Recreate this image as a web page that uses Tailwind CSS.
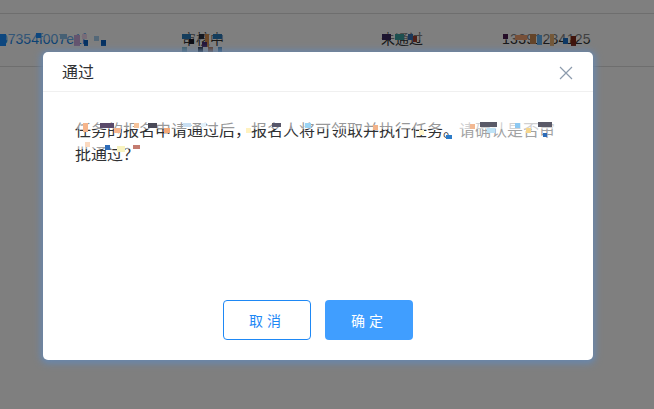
<!DOCTYPE html>
<html lang="zh-CN">
<head>
  <meta charset="UTF-8">
  <title>通过</title>
  <script src="https://cdn.jsdelivr.net/npm/@tailwindcss/browser@4"></script>
</head>
<body class="bg-white font-['Liberation_Sans','Noto_Sans_CJK_SC',sans-serif]">
  <div class="relative h-[409px] w-[654px] overflow-hidden">
    <!-- table behind the dialog -->
    <div class="h-[14px] border-b border-[#dcdcdc]"></div>
    <div class="grid h-[53px] grid-cols-[182px_199px_121px_1fr] items-center border-b border-[#dcdcdc] pb-[1px] text-[14px] text-[#303133]">
      <div class="whitespace-nowrap text-[#1684e8]">07354f007e1f</div>
      <div>审核中</div>
      <div>未通过</div>
      <div class="tracking-[0.3px]">13391234125</div>
    </div>
    <!-- mosaic over the table text -->
    <svg class="absolute left-0 top-0" width="654" height="60">
      <rect x="0" y="33" width="90" height="7" fill="#ffffff" fill-opacity=".35"/>
      <rect x="182" y="33" width="46" height="7" fill="#ffffff" fill-opacity=".4"/>
      <rect x="381" y="33" width="43" height="7" fill="#ffffff" fill-opacity=".4"/>
      <rect x="502" y="33" width="92" height="7" fill="#ffffff" fill-opacity=".4"/>
      <g fill="#1a8fff"><rect x="0" y="34" width="6" height="12"/><rect x="36" y="33" width="5" height="5"/><rect x="84" y="40" width="4" height="6" fill="#0b63c5"/><rect x="101" y="40" width="5" height="6" fill="#0b63c5"/></g>
      <rect x="60" y="34" width="7" height="5" fill="#8cc0e8"/><rect x="74" y="35" width="6" height="11" fill="#c9a8dc"/><rect x="82" y="34" width="5" height="5" fill="#f0d8f0"/><rect x="94" y="36" width="5" height="5" fill="#a8d0f0"/>
      <rect x="182" y="34" width="9" height="5" fill="#2a7ab8"/><rect x="189" y="39" width="5" height="5" fill="#1a1a2a"/><rect x="199" y="34" width="5" height="5" fill="#2a3040"/><rect x="205" y="34" width="4" height="13" fill="#d89050"/><rect x="202" y="42" width="5" height="5" fill="#4a2a70"/><rect x="213" y="34" width="9" height="5" fill="#2a7ab8"/><rect x="182" y="47" width="5" height="5" fill="#80b8c8"/><rect x="198" y="47" width="5" height="5" fill="#1a2030"/><rect x="208" y="47" width="5" height="5" fill="#b87048"/><rect x="218" y="47" width="4" height="5" fill="#4a90c8"/>
      <rect x="382" y="34" width="9" height="6" fill="#3a2a60"/><rect x="395" y="34" width="9" height="6" fill="#3aa0a0"/><rect x="408" y="34" width="5" height="6" fill="#3a70b0"/><rect x="413" y="36" width="4" height="6" fill="#a04030"/>
      <rect x="503" y="34" width="5" height="5" fill="#4a1a50"/><rect x="515" y="35" width="12" height="5" fill="#f0a070"/><rect x="530" y="34" width="6" height="10" fill="#c88850"/><rect x="537" y="35" width="5" height="10" fill="#60b0f0"/><rect x="550" y="34" width="4" height="12" fill="#e8b070"/><rect x="563" y="38" width="5" height="6" fill="#1a70c8"/><rect x="571" y="36" width="5" height="10" fill="#802818"/>
    </svg>
    <div class="absolute inset-0 bg-black/50"></div>

    <!-- dialog -->
    <div class="absolute left-[43px] top-[52px] flex h-[308px] w-[550px] flex-col rounded-[5px] bg-white shadow-[0_1px_6px_3px_#6a87ab]">
      <div class="flex h-[40px] shrink-0 items-center justify-between border-b border-[#f0f0f0] pl-[19px] pr-[19px] pt-[2px]">
        <span class="text-[16px] text-[#303133]">通过</span>
        <svg width="16" height="16" viewBox="0 0 16 16" fill="none" stroke="#8c9bad" stroke-width="1.2"><path d="M2 2l12 12M14 2L2 14"/></svg>
      </div>
      <div class="relative flex-1 px-[32px] pt-[27px]">
        <p class="w-[482px] text-[16px] leading-[24px] text-[#303133]">任务的报名申请通过后，报名人将可领取并执行任务。请确认是否审批通过？</p>
        <!-- mosaic over the message -->
        <svg class="absolute left-0 top-0" width="550" height="70">
          <rect x="32" y="30" width="480" height="7" fill="#ffffff" fill-opacity=".5"/>
          <rect x="415" y="30" width="96" height="20" fill="#ffffff" fill-opacity=".55"/>
          <rect x="32" y="50" width="100" height="7" fill="#ffffff" fill-opacity=".55"/>
          <rect x="40" y="31" width="5" height="9" fill="#f6b58c"/><rect x="42" y="50" width="5" height="5" fill="#fbd9bf"/>
          <rect x="57" y="31" width="14" height="5" fill="#5a4a6a"/><rect x="71" y="36" width="7" height="5" fill="#f6b58c"/>
          <rect x="91" y="31" width="5" height="5" fill="#f6c39a"/><rect x="105" y="31" width="9" height="5" fill="#4a4a58"/><rect x="121" y="36" width="6" height="5" fill="#f2a878"/>
          <rect x="140" y="31" width="8" height="4" fill="#c9dff2"/><rect x="158" y="31" width="5" height="4" fill="#e2f1fb"/>
          <rect x="203" y="36" width="5" height="5" fill="#fff2c0"/><rect x="229" y="31" width="9" height="4" fill="#57576a"/><rect x="262" y="31" width="6" height="5" fill="#9ad4f5"/>
          <rect x="330" y="33" width="5" height="5" fill="#f2b38a"/><rect x="376" y="38" width="5" height="5" fill="#fff5c8"/>
          <rect x="403" y="43" width="6" height="4" fill="#2d7cc8"/>
          <rect x="427" y="32" width="5" height="5" fill="#f2b892"/><rect x="437" y="30" width="17" height="5" fill="#5a5a68"/><rect x="444" y="36" width="8" height="5" fill="#bfe3f5"/>
          <rect x="472" y="31" width="5" height="5" fill="#8cc8f2"/><rect x="483" y="36" width="5" height="5" fill="#f6d68c"/>
          <rect x="495" y="30" width="14" height="5" fill="#5a5a68"/><rect x="500" y="41" width="4" height="4" fill="#2d6cb8"/>
          <rect x="62" y="53" width="5" height="5" fill="#2d6cb8"/><rect x="74" y="54" width="8" height="6" fill="#f8f3c0"/><rect x="90" y="53" width="7" height="4" fill="#c47c70"/>
        </svg>
      </div>
      <div class="flex shrink-0 justify-center gap-[14px] pb-[20px]">
        <button class="h-[40px] w-[88px] rounded-[4px] border border-[#1e88f5] bg-white pt-[2px] text-[14px] tracking-[4px] text-[#1e88f5]">取消</button>
        <button class="h-[40px] w-[88px] rounded-[4px] bg-[#409eff] pt-[2px] text-[14px] tracking-[4px] text-white">确定</button>
      </div>
    </div>
  </div>
</body>
</html>
